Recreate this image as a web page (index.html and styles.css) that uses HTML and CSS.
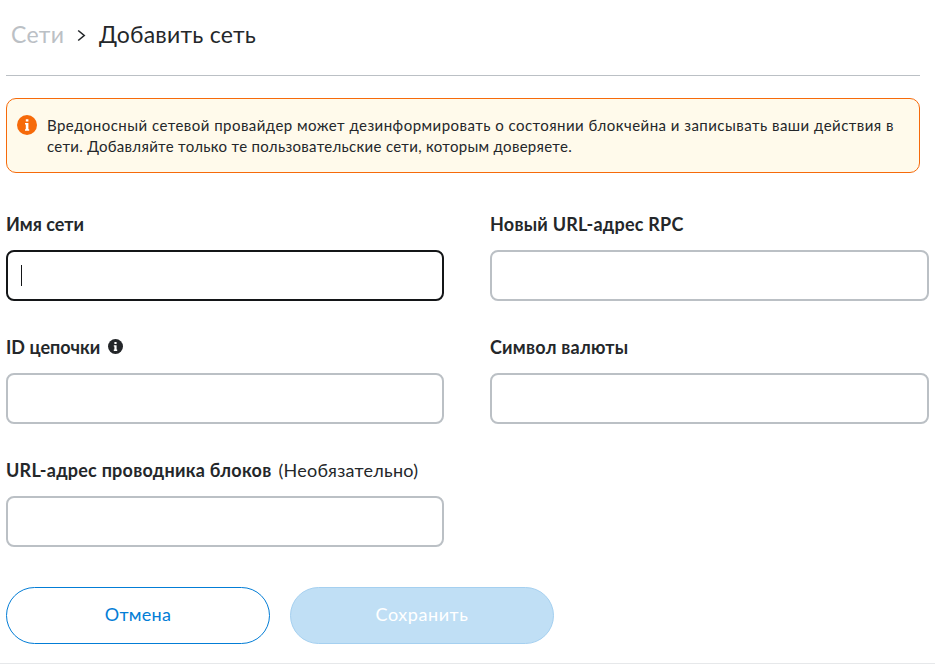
FILE: index.html
```html
<!DOCTYPE html>
<html lang="ru">
<head>
  <meta charset="UTF-8" />
  <meta name="viewport" content="width=device-width, initial-scale=1.0"/>
  <title>Добавить сеть</title>
  <link rel="stylesheet" href="styles.css">
</head>
<body>

<div class="page">
  <div class="header">
    <span class="header-parent">Сети</span>
    <svg class="header-arrow" width="9" height="13" viewBox="0 0 9 13"><path d="M1.2 1.5l6 5-6 5" fill="none" stroke="#24272a" stroke-width="1.6"/></svg>
    <span class="header-title">Добавить сеть</span>
  </div>

  <div class="warning">
    <svg class="warning-icon" width="20" height="20" viewBox="0 0 20 20">
      <circle cx="10" cy="10" r="10" fill="#f66a0a"/>
      <path d="M8.8 4.2h2.6v2.4H8.8zM8 8h3.4v6.2h.8v1.6H8v-1.6h.8V9.6H8z" fill="#fff"/>
    </svg>
    <p class="warning-text"><span class="warning-line">Вредоносный сетевой провайдер может дезинформировать о состоянии блокчейна и записывать ваши действия в</span> <span class="warning-line second">сети. Добавляйте только те пользовательские сети, которым доверяете.</span></p>
  </div>

  <form id="networkForm">
    <div class="fields">
      <div class="field">
        <label for="name"><b>Имя сети</b></label>
        <input class="active" type="text" id="name" />
      </div>
      <div class="field">
        <label for="rpc"><b class="wide">Новый URL-адрес RPC</b></label>
        <input type="text" id="rpc" />
      </div>
      <div class="field">
        <label for="chain"><b>ID цепочки</b>
          <svg class="label-icon" width="15" height="15" viewBox="0 0 15 15">
            <circle cx="7.5" cy="7.5" r="7.5" fill="#24272a"/>
            <path d="M6.4 3h2.2v2H6.4zM5.8 6.2h2.8v4.4h.6V12H5.8v-1.4h.6V7.5h-.6z" fill="#fff"/>
          </svg>
        </label>
        <input type="text" id="chain" />
      </div>
      <div class="field">
        <label for="symbol"><b class="wide">Символ валюты</b></label>
        <input type="text" id="symbol" />
      </div>
      <div class="field">
        <label for="explorer"><b class="wide">URL-адрес проводника блоков</b> <span class="optional">(Необязательно)</span></label>
        <input type="text" id="explorer" />
      </div>
    </div>

    <div class="buttons">
      <button type="button" class="cancel">Отмена</button>
      <button type="submit" class="save" disabled>Сохранить</button>
    </div>
  </form>
</div>

</body>
</html>
```
FILE: styles.css
```css
* {
  box-sizing: border-box;
}
body {
  font-family: Lato, "Noto Sans", sans-serif;
  background: #fff;
  color: #24272a;
  margin: 0;
}
.page {
  height: 664px;
  padding: 0 6px;
  border-bottom: 1px solid #e6e8ea;
}
.header {
  display: flex;
  align-items: center;
  width: 914px;
  height: 76px;
  padding: 0 0 7px 5px;
  border-bottom: 1px solid #bbc0c5;
  font-size: 23px;
  white-space: nowrap;
}
.header-parent {
  color: #bbc0c5;
  width: 66px;
  letter-spacing: 0.3px;
}
.header-arrow {
  margin-top: 3px;
}
.header-title {
  margin-left: 13px;
  letter-spacing: 0.25px;
}
.warning {
  display: flex;
  width: 914px;
  height: 75px;
  margin-top: 22px;
  padding: 16px 10px;
  border: 1px solid #f66a0a;
  border-radius: 10px;
  background: #fffaeb;
}
.warning-text {
  margin: 0 0 0 10px;
  font-size: 15px;
  line-height: 21px;
}
.warning-line {
  display: block;
  white-space: nowrap;
  letter-spacing: 0.47px;
}
.warning-line.second {
  letter-spacing: 0.31px;
}
.fields {
  display: grid;
  grid-template-columns: 438px 439px;
  column-gap: 46px;
  row-gap: 22px;
  margin-top: 39px;
}
.field {
  height: 101px;
}
label {
  display: flex;
  align-items: center;
  height: 24px;
  margin-bottom: 14px;
  font-size: 18px;
  white-space: nowrap;
}
label .wide {
  letter-spacing: 0.24px;
}
.label-icon {
  margin: -2px 0 0 8px;
}
.optional {
  margin-left: 7px;
  letter-spacing: 0.25px;
}
input {
  display: block;
  width: 100%;
  height: 51px;
  padding: 0 13px;
  border: 2px solid #bbc0c5;
  border-radius: 8px;
  background: #fff;
  font: inherit;
}
/* active field with its caret */
input.active {
  border-color: #141618;
  background: linear-gradient(#141618, #141618) 13px 13px / 1px 21px no-repeat #fff;
}
.buttons {
  display: flex;
  gap: 20px;
  margin-top: 28px;
}
button {
  width: 264px;
  height: 57px;
  padding: 0 0 3px;
  border: 1px solid #037dd6;
  border-radius: 29px;
  background: #fff;
  color: #037dd6;
  font-family: inherit;
  font-size: 18px;
  letter-spacing: 0.3px;
}
button.save {
  border-color: #a5d0f0;
  background: #c0dff5;
  color: #fff;
  letter-spacing: 0.55px;
}
```
